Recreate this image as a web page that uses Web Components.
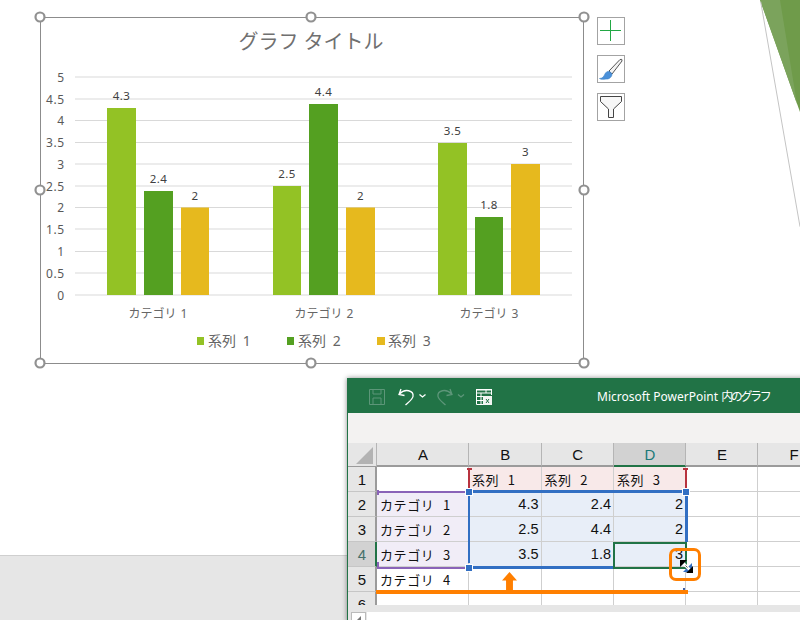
<!DOCTYPE html>
<html lang="ja"><head><meta charset="utf-8">
<style>
html,body{margin:0;padding:0;width:800px;height:620px;overflow:hidden;background:#fff}
body{font-family:"Noto Sans","Noto Sans CJK JP",sans-serif;position:relative}
</style></head><body>
<ppt-slide>
  <chart-frame slot="chart"></chart-frame>
  <chart-tools slot="tools"></chart-tools>
  <sheet-window slot="sheet"></sheet-window>
</ppt-slide>
<script>
function def(name,html){customElements.define(name,class extends HTMLElement{constructor(){super();this.attachShadow({mode:'open'}).innerHTML=html}})}

def('ppt-slide',`<style>
:host{display:block;position:relative;width:800px;height:620px;overflow:hidden}
.deco{position:absolute;right:0;top:0}
.strip{position:absolute;left:0;right:0;top:555px;bottom:0;background:#e6e6e6;border-top:1px solid #cfcfcf}
</style>
<div class="strip"></div>
<svg class="deco" width="60" height="240" viewBox="0 0 60 240">
<polygon points="20,0 60,0 60,112" fill="#6f9b4a"/>
<polygon points="20,0 40,0 57,104" fill="#7ba35c"/>
<polyline points="20.700,1.700 60,226.700" fill="none" stroke="#c4c4c4" stroke-width="1"/>
</svg>
<slot name="chart"></slot><slot name="tools"></slot><slot name="sheet"></slot>`);

const F='"Noto Sans","Noto Sans CJK JP",sans-serif';
const ys=[[5,77],[4.5,99],[4,120.5],[3.5,142.5],[3,164],[2.5,186],[2,207.5],[1.5,229],[1,251.5],[.5,273],[0,295]];
let grid=ys.map(([v,y])=>`<line x1="75" x2="572" y1="${y}" y2="${y}" stroke="#d9d9d9"/><text x="64.500" y="${y+4.5}" text-anchor="end" class="ax">${v}</text>`).join('');
const bars=[[107,29,108,'#93c225','4.3'],[144,29,191,'#54a021','2.4'],[181,28,207.5,'#e6b91e','2'],
[273,28,186,'#93c225','2.5'],[309,29,104,'#54a021','4.4'],[346,29,207.5,'#e6b91e','2'],
[438,29,143,'#93c225','3.5'],[475,28,217,'#54a021','1.8'],[511,29,164,'#e6b91e','3']];
let bs=bars.map(([x,w,y,c,l])=>`<rect x="${x}" y="${y}" width="${w}" height="${295-y}" fill="${c}"/><text x="${x+w/2}" y="${y-8}" text-anchor="middle" class="dl">${l}</text>`).join('');
const hs=[[40,17],[311,17],[584,17],[40,190],[584,190],[40,363],[311,363],[584,363]].map(([x,y])=>`<circle cx="${x}" cy="${y}" r="4.500" fill="#fff" stroke="#919191" stroke-width="2.200"/>`).join('');
def('chart-frame',`<style>
:host{display:block;position:absolute;left:0;top:0;width:600px;height:375px}
svg{display:block;font-family:${F}}
.ax{font-size:12px;fill:#595959;letter-spacing:.5px}.dl{font-size:11.500px;fill:#404040;letter-spacing:.5px}
.cat{font-size:12px;fill:#666;word-spacing:1px}.lg{font-size:14px;fill:#666;word-spacing:3px}
.ti{font-size:20px;fill:#707070}
</style><svg width="600" height="375">
<rect x="40.500" y="17.500" width="543" height="346" fill="none" stroke="#8c8c8c"/>
<text x="311" y="49" text-anchor="middle" class="ti">グラフ タイトル</text>
${grid}${bs}
<text x="158" y="318" text-anchor="middle" class="cat">カテゴリ 1</text>
<text x="324" y="318" text-anchor="middle" class="cat">カテゴリ 2</text>
<text x="489" y="318" text-anchor="middle" class="cat">カテゴリ 3</text>
<rect x="197" y="337" width="7" height="8" fill="#93c225"/><text x="208" y="346" class="lg">系列 1</text>
<rect x="287" y="337" width="7" height="8" fill="#54a021"/><text x="298" y="346" class="lg">系列 2</text>
<rect x="377" y="337" width="8" height="8" fill="#e6b91e"/><text x="388" y="346" class="lg">系列 3</text>
${hs}</svg>`);

def('tool-btn',`<style>:host{display:flex;box-sizing:border-box;width:28px;height:28px;border:1px solid #a3a3a3;background:#fff;align-items:center;justify-content:center}</style><slot></slot>`);
def('chart-tools',`<style>:host{display:flex;flex-direction:column;gap:10px;position:absolute;left:597px;top:17px}svg{display:block}</style>
<tool-btn><svg width="26" height="26"><path d="M12.500 2V23M2 12.500H23" stroke="#22a744" stroke-width="1" fill="none"/></svg></tool-btn>
<tool-btn><svg width="26" height="26" viewBox="0 0 26 26"><path d="M11 15L22 3.500Q24.500 2.500 24 5L14 18Z" fill="#f2f2f2" stroke="#555" stroke-width="1"/><path d="M1.500 22.500C5 22.500 6 20 7.500 17C9.500 14.500 12.500 15 14 18C14 21 11 23.500 8 23C5.500 23.500 3 23.500 1.500 22.500Z" fill="#4a90d9" stroke="#3b7fc4" stroke-width=".6"/></svg></tool-btn>
<tool-btn><svg width="26" height="26" viewBox="0 0 26 26"><path d="M2.500 2.500H23.500V7.500L15.500 15V23.500H10.500V15L2.500 7.500Z" fill="#f7f7f7" stroke="#444" stroke-width="1"/></svg></tool-btn>`);

const cols=['A','B','C','D','E','F'];
const rows=[
['',['系列 1'],['系列 2'],['系列 3']],
[['カテゴリ 1'],'4.3','2.4','2'],
[['カテゴリ 2'],'2.5','4.4','2'],
[['カテゴリ 3'],'3.5','1.8','3'],
[['カテゴリ 4'],'','',''],
['','','','']];
const tint=(r,c)=>{if(r==0&&c>=1&&c<=3)return '#f8e9e9';if(r>=1&&r<=3&&c==0)return '#f1edf7';if(r>=1&&r<=3&&c>=1&&c<=3)return '#e8eef8';return '#fff'};
let cells='<div class="corner"><svg width="28" height="23"><polygon points="26,4 26,21 9,21" fill="#b3b3b3"/></svg></div>'+
cols.map((c,i)=>`<div class="ch${i==3?' sel':''}">${c}</div>`).join('');
rows.forEach((r,ri)=>{cells+=`<div class="rh${ri==3?' sel':''}">${ri+1}</div>`;
 for(let c=0;c<6;c++){const v=r[c]===undefined?'':r[c];const txt=Array.isArray(v)?v[0]:v;const left=Array.isArray(v);
 cells+=`<div class="c${left?' l':''}" style="background:${tint(ri,c)}">${txt}</div>`}});
const B='#326fc3',P='#8a63b8',R='#b8333f',O='#ff7f00';
const ov=(l,t,w,h,c)=>`<div class="ov" style="left:${l-347}px;top:${t-443}px;width:${w}px;height:${h}px;background:${c}"></div>`;
const hd=(x,y)=>`<div class="ov" style="left:${x-347-4}px;top:${y-443-4}px;width:6px;height:6px;background:${B};border:1px solid #fff"></div>`;
def('sheet-window',`<style>
:host{display:block;position:absolute;left:347px;top:378px;width:460px;height:245px;background:#e6e6e6;box-shadow:0 0 5px rgba(0,0,0,.45);font-family:"Liberation Sans","Noto Sans CJK JP",sans-serif;color:#111}
:host::after{content:"";position:absolute;left:0;top:0;width:1px;height:100%;background:#217346}
.title{height:35px;background:#217346;position:relative}
.title svg{position:absolute;left:21px;top:5px}
.title span{position:absolute;left:250px;top:9px;color:#fff;font:12px "Noto Sans","Noto Sans CJK JP",sans-serif;white-space:nowrap}
.title b{font-weight:400;letter-spacing:-2.400px}
.ribbon{height:30px;background:#f3f2f1}
.grid{display:grid;grid-template-columns:30px 92px 72.500px 72.500px 72px 72px 72px;grid-template-rows:24px 25px 25px 25px 25px 25px 25px;position:relative;width:460px;height:162px;overflow:hidden;background:#fff}
.corner{background:#e6e6e6;border-right:1px solid #b5b5b5;border-bottom:1px solid #9b9b9b;box-sizing:border-box}
.ch{background:#e6e6e6;border-right:1px solid #b5b5b5;border-bottom:2px solid #9b9b9b;box-sizing:border-box;display:flex;align-items:center;justify-content:center;font-size:15px;padding-top:1px;padding-left:1px}
.ch.sel{background:#d2d2d2;border-bottom:2px solid #217346;color:#1b7a78}
.rh{background:#e6e6e6;border-right:2px solid #9b9b9b;border-bottom:1px solid #c6c6c6;box-sizing:border-box;display:flex;align-items:center;justify-content:center;font-size:15px;padding-left:2px}
.rh.sel{background:#d2d2d2;border-right:2px solid #217346;color:#46706a}
.c{border-right:1px solid #cfcfcf;border-bottom:1px solid #cfcfcf;box-sizing:border-box;display:flex;align-items:center;justify-content:flex-end;font-size:14.500px;padding:0 2px;white-space:nowrap;overflow:hidden}
.c.l{justify-content:flex-start;padding-left:3px;font:13px "Noto Sans CJK JP",sans-serif;letter-spacing:.6px;word-spacing:5px}
.ov{position:absolute}
.bottom{height:28px;background:#e6e6e6;box-sizing:border-box;display:flex;padding:7px 0 0 4px;gap:1px}
.arrow{width:15px;height:15px;background:#fff;border:1px solid #bbb;box-sizing:border-box;display:flex;align-items:center;justify-content:center}
.arrow i{display:block;border:4px solid transparent;border-right:4px solid #777;margin-left:-4px}
.track{flex:1;background:#fff}
</style>
<div class="title">
<svg width="130" height="24" viewBox="0 0 130 24" fill="none">
<path d="M1.500 6.500H16.500V21.500H1.500ZM5 6.500V11H13V6.500M5 21.500V15H13V21.500" stroke="#5d9679" stroke-width="1"/>
<path d="M33 6L31 11.500L36.500 12.500M31.500 11C37 5 46 7.500 45 13.500C44.500 16.500 40 19.500 37.500 22" stroke="#fff" stroke-width="1.300"/>
<path d="M51.500 11.500L54.500 14L57.500 11.500" stroke="#fff" stroke-width="1.300"/>
<path d="M82 6L84 11.500L78.500 12.500M83.500 11C78 5 69 7.500 70 13.500C70.500 16.500 75 19.500 77.500 22" stroke="#5d9679" stroke-width="1.300"/>
<path d="M90 11.500L93 14L96 11.500" stroke="#5d9679" stroke-width="1.300"/>
<path d="M108.500 21.500V6.500H123.500V12M108.500 10H123.500M108.500 13.500H115M108.500 17.500H115M108.500 21.500H115M113 10V21.500M118 6.500V10" stroke="#fff" stroke-width="1"/>
<rect x="108" y="6" width="16" height="1.500" fill="#fff"/>
<rect x="115" y="13" width="9" height="9" fill="#f2f5f3"/>
<path d="M118 16L121 20M121 16L118 20" stroke="#217346" stroke-width="1"/>
</svg>
<span>Microsoft PowerPoint <b>内のグラフ</b></span></div>
<div class="ribbon"></div>
<div class="grid">${cells}
${ov(377,604.500,440,1.500,'#a5a5a5')}
${ov(468,468,2,20,R)}${ov(467,468,5,2,R)}
${ov(685,470,2,18,R)}${ov(683,468,5,2,R)}
${ov(379,490.500,86,2.500,P)}${ov(377,490,2,5,P)}
${ov(379,566.500,86,2.500,P)}${ov(377,562,2,7,P)}
${ov(473,490,210,3,B)}${ov(473,566,140,3,B)}
${ov(467.500,495,2.500,68,B)}${ov(684.500,495,3,47,B)}
${hd(469,491.500)}${hd(686,491.500)}${hd(469,567.500)}
${ov(613,542,74,27,'transparent').replace('background:transparent','border:2px solid #217346;box-sizing:border-box')}
${ov(683,588,2,2,'#3b5fa8')}
${ov(376,590,312,4,O)}
<div class="ov" style="left:155px;top:129px;width:15px;height:19px;background:${O};clip-path:polygon(50% 0,100% 45%,73% 45%,73% 100%,27% 100%,27% 45%,0 45%)"></div>
<div class="ov" style="left:322px;top:105px;width:32px;height:33px;border:3px solid ${O};border-radius:7px;box-sizing:border-box"></div>
<svg class="ov" style="left:332px;top:116px" width="15" height="15" viewBox="0 0 15 15"><polygon points="4,13 13,13 13,4" fill="#326fc3"/><path d="M3.500 5.500L9.500 11.500L11.500 9.500L5.500 3.500Z" fill="#fff"/><path d="M1 1H8L1 8Z M14 14H7L14 7Z" fill="#000"/><path d="M8.500 8.500L6.500 6.500" stroke="#555" stroke-width="1"/></svg>
</div>
<div class="bottom"><div class="arrow"><i></i></div><div class="track"></div></div>`);
</script></body></html>
